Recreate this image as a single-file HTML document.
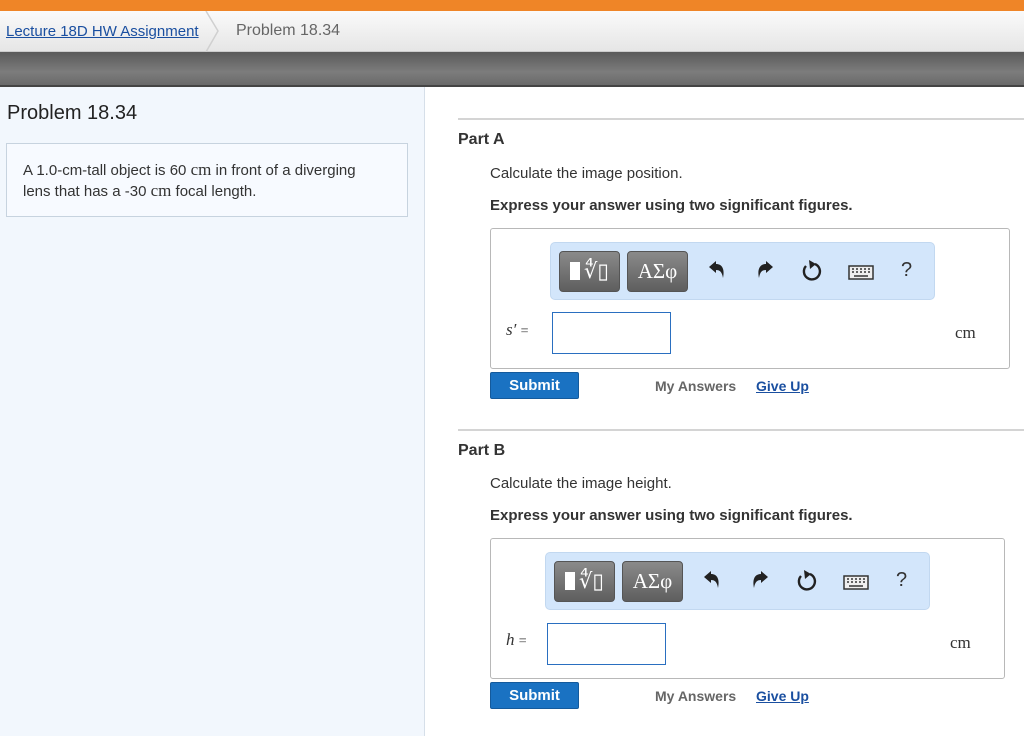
<!DOCTYPE html>
<html><head><style>
*{margin:0;padding:0;box-sizing:border-box}
body{width:1024px;height:736px;overflow:hidden;font-family:"Liberation Sans",sans-serif;background:#fff;position:relative}
.a{position:absolute}
.tb{position:absolute;width:385px;height:58px;background:#d3e6fb;border:1px solid #c2d8f0;border-radius:5px}
.btn{position:absolute;top:8px;width:61px;height:41px;border-radius:4px;background:linear-gradient(#8a8a8a,#5e5e5e);border:1px solid #555;color:#fff;font-family:"Liberation Serif",serif;font-size:21px;text-align:center;line-height:39px}
.ic{position:absolute;top:17px}
.box{position:absolute;border:1px solid #b8b8b8;border-radius:3px;background:#fff}
.inp{position:absolute;width:119px;height:42px;border:1px solid #2a6fc0;background:#fff}
.sub{position:absolute;width:89px;height:27px;background:#1a72c2;border:1px solid #145a9c;border-radius:2px;color:#fff;font-weight:bold;font-size:15px;text-align:center;line-height:25px}
.ma{position:absolute;font-size:14px;font-weight:bold;color:#666}
.gu{position:absolute;font-size:14px;font-weight:bold;color:#1a4fa0;text-decoration:underline}
.t{position:absolute;font-size:15px;color:#333}
.b{position:absolute;font-size:15px;font-weight:bold;color:#333}
.cm{position:absolute;font-family:"Liberation Serif",serif;font-size:17px;color:#333}
</style></head><body>
<div class="a" style="left:0;top:0;width:1024px;height:11px;background:#ef8527"></div>
<div class="a" style="left:0;top:11px;width:1024px;height:41px;background:linear-gradient(#fafafa,#e6e6e6);border-bottom:1px solid #ccc"></div>
<div class="a" style="left:6px;top:23px;font-size:15px;color:#1a4fa0;text-decoration:underline">Lecture 18D HW Assignment</div>
<svg class="a" style="left:205px;top:11px" width="15" height="41"><path d="M1 0 L13 20 L1 41" fill="none" stroke="#d0d0d0" stroke-width="1.5"/></svg>
<div class="a" style="left:236px;top:22px;font-size:16px;color:#666">Problem 18.34</div>
<div class="a" style="left:0;top:52px;width:1024px;height:35px;background:linear-gradient(#5a5a5a,#7c7c7c 60%,#6a6a6a);border-bottom:2px solid #444"></div>
<div class="a" style="left:0;top:87px;width:425px;height:649px;background:#f2f7fd;border-right:1px solid #d6dfe9"></div>
<div class="a" style="left:7px;top:102px;font-size:20px;color:#222">Problem 18.34</div>
<div class="a" style="left:6px;top:143px;width:402px;height:74px;background:#f7faff;border:1px solid #c7d3df"></div>
<div class="t" style="left:23px;top:160px;width:355px;line-height:20px;color:#333">A 1.0-cm-tall object is 60 <span style="font-family:'Liberation Serif',serif;font-size:17px">cm</span> in front of a diverging lens that has a -30 <span style="font-family:'Liberation Serif',serif;font-size:17px">cm</span> focal length.</div>

<div class="a" style="left:458px;top:118px;width:566px;height:2px;background:#d4d4d4"></div>
<div class="b" style="left:458px;top:131px;font-size:16px">Part A</div>
<div class="t" style="left:490px;top:165px">Calculate the image position.</div>
<div class="b" style="left:490px;top:197px">Express your answer using two significant figures.</div>
<div class="box" style="left:490px;top:228px;width:520px;height:141px"></div>
<div class="tb" style="left:550px;top:242px">
<div class="btn" style="left:8px"><span style="display:inline-block;width:10px;height:18px;background:#fff;vertical-align:-2px;margin-right:4px"></span>∜▯</div>
<div class="btn" style="left:76px">ΑΣφ</div>
<svg class="ic" style="left:156px" width="20" height="22"><path d="M2 7 L9 1 L9 4 C15 4 18 9 16 18 C15 12 13 10 9 10 L9 13 Z" fill="#222"/></svg>
<svg class="ic" style="left:204px" width="20" height="22"><path d="M18 7 L11 1 L11 4 C5 4 2 9 4 18 C5 12 7 10 11 10 L11 13 Z" fill="#222"/></svg>
<svg class="ic" style="left:250px" width="22" height="24"><path d="M14 4 A8 8 0 1 1 5 6" fill="none" stroke="#222" stroke-width="2.4"/><path d="M8 0 L15 4 L9 9 Z" fill="#222"/></svg>
<svg class="ic" style="left:297px;top:22px" width="26" height="15"><rect x="1" y="1" width="24" height="13" fill="#eee" stroke="#333" stroke-width="1.5"/><path d="M4 4h2M8 4h2M12 4h2M16 4h2M20 4h2M4 7h2M8 7h2M12 7h2M16 7h2M20 7h2M6 11h14" stroke="#333" stroke-width="1.5"/></svg>
<div class="ic" style="left:350px;top:16px;font-size:20px;color:#333">?</div>
</div>
<div class="cm" style="left:506px;top:320px;font-style:italic">s′ <span style="font-style:normal;font-size:14px">=</span></div>
<div class="inp" style="left:552px;top:312px"></div>
<div class="cm" style="left:955px;top:323px">cm</div>
<div class="sub" style="left:490px;top:372px">Submit</div>
<div class="ma" style="left:655px;top:378px">My Answers</div>
<div class="gu" style="left:756px;top:378px">Give Up</div>

<div class="a" style="left:458px;top:429px;width:566px;height:2px;background:#d4d4d4"></div>
<div class="b" style="left:458px;top:442px;font-size:16px">Part B</div>
<div class="t" style="left:490px;top:475px">Calculate the image height.</div>
<div class="b" style="left:490px;top:507px">Express your answer using two significant figures.</div>
<div class="box" style="left:490px;top:538px;width:515px;height:141px"></div>
<div class="tb" style="left:545px;top:552px">
<div class="btn" style="left:8px"><span style="display:inline-block;width:10px;height:18px;background:#fff;vertical-align:-2px;margin-right:4px"></span>∜▯</div>
<div class="btn" style="left:76px">ΑΣφ</div>
<svg class="ic" style="left:156px" width="20" height="22"><path d="M2 7 L9 1 L9 4 C15 4 18 9 16 18 C15 12 13 10 9 10 L9 13 Z" fill="#222"/></svg>
<svg class="ic" style="left:204px" width="20" height="22"><path d="M18 7 L11 1 L11 4 C5 4 2 9 4 18 C5 12 7 10 11 10 L11 13 Z" fill="#222"/></svg>
<svg class="ic" style="left:250px" width="22" height="24"><path d="M14 4 A8 8 0 1 1 5 6" fill="none" stroke="#222" stroke-width="2.4"/><path d="M8 0 L15 4 L9 9 Z" fill="#222"/></svg>
<svg class="ic" style="left:297px;top:22px" width="26" height="15"><rect x="1" y="1" width="24" height="13" fill="#eee" stroke="#333" stroke-width="1.5"/><path d="M4 4h2M8 4h2M12 4h2M16 4h2M20 4h2M4 7h2M8 7h2M12 7h2M16 7h2M20 7h2M6 11h14" stroke="#333" stroke-width="1.5"/></svg>
<div class="ic" style="left:350px;top:16px;font-size:20px;color:#333">?</div>
</div>
<div class="cm" style="left:506px;top:630px;font-style:italic">h <span style="font-style:normal;font-size:14px">=</span></div>
<div class="inp" style="left:547px;top:623px"></div>
<div class="cm" style="left:950px;top:633px">cm</div>
<div class="sub" style="left:490px;top:682px">Submit</div>
<div class="ma" style="left:655px;top:688px">My Answers</div>
<div class="gu" style="left:756px;top:688px">Give Up</div>
</body></html>
